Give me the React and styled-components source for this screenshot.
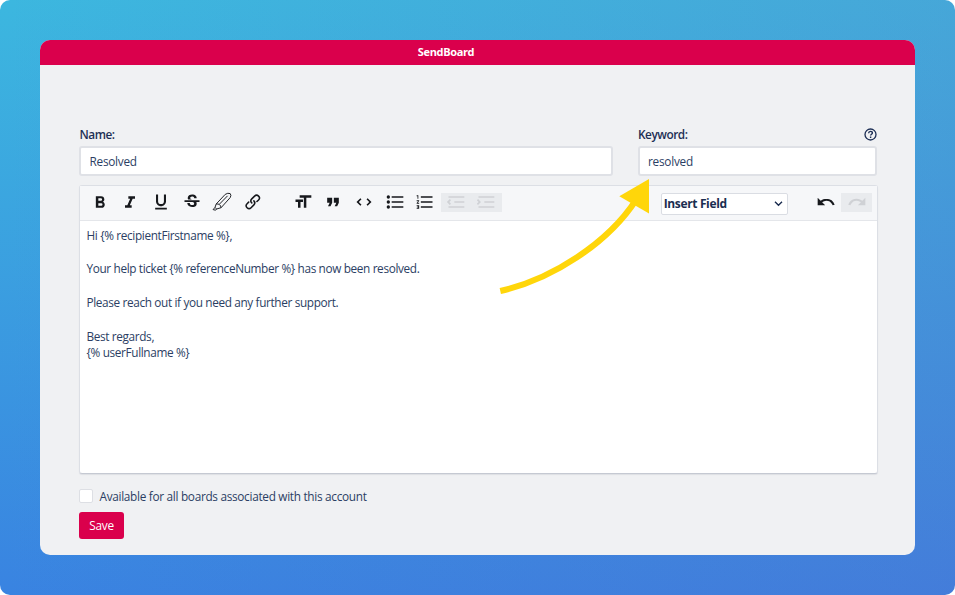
import React from 'react';
import styled, { createGlobalStyle } from 'styled-components';

const GlobalStyle = createGlobalStyle`
    * {
        box-sizing: border-box;
    }
    body {
        margin: 0;
        background: #fff;
        color: #2b3e63;
        font-family: "Open Sans", "Noto Sans", sans-serif;
        font-size: 11.8px;
        letter-spacing: -0.36px;
    }
`
const SPage = styled.div`
    width: 955px;
    height: 595px;
    padding: 40px;
    border-radius: 10px;
    background:
        linear-gradient(90deg, rgba(115, 95, 185, 0) 0%, rgba(115, 95, 185, 0.18) 100%),
        linear-gradient(180deg, #3cb7df 0%, #3983e1 100%);
`
const SCard = styled.main`
    position: relative;
    height: 515px;
    border-radius: 10px;
    overflow: hidden;
    background: #f0f1f3;
`
const SHeader = styled.header`
    height: 24.5px;
    background: #da004c;
    color: #fff;
    font-size: 11px;
    font-weight: 700;
    letter-spacing: -0.35px;
    line-height: 24px;
    text-align: center;
    padding-right: 63px;
`
const SForm = styled.div`
    padding: 61.5px 37px 0 39px;
`
const SFields = styled.div`
    display: grid;
    grid-template-columns: 533.5px 239.5px;
    justify-content: space-between;
    padding-right: 1px;
`
const SLabel = styled.label`
    display: flex;
    align-items: center;
    justify-content: space-between;
    height: 16px;
    margin-bottom: 4px;
    font-weight: 600;
    letter-spacing: -0.45px;
    color: #1d2f55;
    padding-left: 0.5px;
`
const SInput = styled.input`
    display: block;
    width: 100%;
    height: 30px;
    padding: 0 8px 0 8.5px;
    border: 2px solid #dfe1e6;
    border-radius: 3px;
    background: #fff;
    color: inherit;
    font: inherit;
    letter-spacing: -0.25px;
    outline: none;
`
const SEditor = styled.section`
    height: 289px;
    margin-top: 9px;
    border: 1px solid #dcdfe5;
    border-bottom-color: #c5c9d2;
    border-radius: 3px;
    background: #fff;
    box-shadow: 0 1px 1px rgba(9, 30, 66, 0.08);
`
const SToolbar = styled.div`
    display: flex;
    align-items: center;
    height: 34.5px;
    padding: 0 4.5px 1.5px;
    border-bottom: 1px solid #e4e6ea;
    background: #f6f7f9;
`
const SGroup = styled.div`
    display: flex;
    margin-left: ${({ $gap }) => $gap || 0}px;
`
const STool = styled.button`
    display: flex;
    align-items: center;
    justify-content: center;
    width: 30.6px;
    height: 19px;
    padding: 0;
    border: 0;
    background: ${({ disabled }) => (disabled ? '#e9ebee' : 'transparent')};
    color: ${({ disabled }) => (disabled ? '#cfd1d5' : '#17191d')};

    & > svg {
        flex: none;
        width: 20px;
        height: 20px;
        fill: currentColor;
    }
`
const SSelect = styled.div`
    display: flex;
    align-items: center;
    justify-content: space-between;
    width: 127px;
    height: 22px;
    margin: 3px 0 0 159px;
    padding: 0 4px 0 2px;
    border: 1px solid #dadde3;
    border-radius: 2px;
    background: #fff;
    color: #1b2d50;
    font-size: 12px;
    font-weight: 700;

    & > svg {
        width: 9px;
        height: 9px;
    }
`
const SBody = styled.div`
    padding: 6px 6.5px;
    line-height: 16.85px;
    white-space: pre-line;
`
const SCheck = styled.label`
    display: flex;
    align-items: center;
    gap: 6.5px;
    height: 16px;
    margin-top: 14px;
    letter-spacing: -0.3px;
`
const SBox = styled.span`
    width: 14px;
    height: 14px;
    border: 1.5px solid #dddfe4;
    border-radius: 2px;
    background: #fff;
`
const SSave = styled.button`
    display: block;
    width: 45px;
    height: 27px;
    margin: 7.5px 0 0;
    padding: 0;
    border: 0;
    border-radius: 3px;
    background: #da004c;
    color: #fff;
    font: inherit;
    letter-spacing: -0.2px;
`
const SArrow = styled.svg`
    position: absolute;
    left: 450px;
    top: 130px;
    width: 170px;
    height: 130px;
`

const paths = {
    bold: 'M15.6 11.8c1-.7 1.6-1.8 1.6-2.8a4 4 0 0 0-4-4H7v14h7c2.1 0 3.7-1.7 3.7-3.8 0-1.5-.8-2.8-2.1-3.4zM10 7.5h3a1.5 1.5 0 1 1 0 3h-3v-3zm3.5 9H10v-3h3.5a1.5 1.5 0 1 1 0 3z',
    italic: 'M10 5v3h2.2l-3.4 8H6v3h8v-3h-2.2l3.4-8H18V5h-8z',
    underline: 'M12 17c3.3 0 6-2.7 6-6V3h-2.5v8a3.5 3.5 0 0 1-7 0V3H6v8c0 3.3 2.7 6 6 6zm-7 2v2h14v-2H5z',
    strike: 'M6.85 7.08C6.85 4.37 9.45 3 12.24 3c1.64 0 3 .49 3.9 1.28.77.65 1.46 1.73 1.46 3.24h-3.01c0-.31-.05-.59-.15-.85-.29-.86-1.2-1.28-2.25-1.28-1.86 0-2.34 1.02-2.34 1.7 0 .48.25.88.74 1.21.38.27.77.5 1.41.72H7.39c-.21-.34-.54-.89-.54-1.92zM21 12v-2H3v2h9.62c1.15.45 1.96.75 1.96 1.97 0 1-.81 1.67-2.28 1.67-1.54 0-2.93-.54-2.93-2.51H6.4c0 .55.08 1.13.24 1.58.81 2.29 3.29 3.3 5.67 3.3 2.27 0 5.3-.89 5.3-4.05 0-.3-.01-1.16-.48-1.94H21V12z',
    link: 'M9.88 13.7a4.3 4.3 0 0 1 0-6.07l3.37-3.37a4.26 4.26 0 0 1 6.07 0 4.3 4.3 0 0 1 0 6.06l-1.96 1.72a.91.91 0 1 1-1.3-1.3l1.97-1.71a2.46 2.46 0 0 0-3.48-3.48l-3.38 3.37a2.46 2.46 0 0 0 0 3.48.91.91 0 1 1-1.3 1.3zM4.25 19.46a4.3 4.3 0 0 1 0-6.07l1.93-1.9a.91.91 0 1 1 1.3 1.3l-1.93 1.9a2.46 2.46 0 0 0 3.48 3.48l3.37-3.38c.96-.96.96-2.52 0-3.48a.91.91 0 1 1 1.3-1.3 4.3 4.3 0 0 1 0 6.07l-3.38 3.38a4.26 4.26 0 0 1-6.07 0z',
    heading: 'M12 9v3H9v7H6v-7H3V9h9zM8 4h14v3h-6v12h-3V7H8V4z',
    quote: 'M6 17h3l2-4V7H5v6h3zm8 0h3l2-4V7h-6v6h3z',
    code: 'M18.2 12L15 15.2l1.4 1.4L21 12l-4.6-4.6L15 8.8l3.2 3.2zM5.8 12L9 8.8 7.6 7.4 3 12l4.6 4.6L9 15.2 5.8 12z',
    bullets: 'M4 4a2 2 0 1 0 0 4 2 2 0 0 0 0-4zm0 6a2 2 0 1 0 0 4 2 2 0 0 0 0-4zm0 6a2 2 0 1 0 0 4 2 2 0 0 0 0-4zM8 5v2h14V5H8zm0 14h14v-2H8v2zm0-6h14v-2H8v2z',
    numbers: 'M2 17h2v.5H3v1h1v.5H2v1h3v-4H2v1zm1-9h1V4H2v1h1v3zm-1 3h1.8L2 13.1v.9h3v-1H3.2L5 10.9V10H2v1zm5-6v2h14V5H7zm0 14h14v-2H7v2zm0-6h14v-2H7v2z',
    outdent: 'M3 19h19v-2H3v2zm7-6h12v-2H10v2zm-8.3-.3l2.8 2.9L6 14.2 4 12l2-2-1.4-1.5L1 12l.7.7zM3 5v2h19V5H3z',
    indent: 'M3 19h19v-2H3v2zm7-6h12v-2H10v2zm-6.9-1L1 14.2l1.4 1.4L6 12l-.7-.7-2.8-2.8L1 9.9 3.1 12zM3 5v2h19V5H3z',
    undo: 'M12.5 8c-2.6 0-5 1-6.9 2.6L2 7v9h9l-3.6-3.6A8 8 0 0 1 20 16l2.4-.8a10.5 10.5 0 0 0-10-7.2z',
    redo: 'M18.4 10.6a10.5 10.5 0 0 0-16.9 4.6L4 16a8 8 0 0 1 12.7-3.6L13 16h9V7l-3.6 3.6z',
}

const Tool = ({ name, disabled }) => (
    <STool type="button" aria-label={name} disabled={disabled}>
        <svg viewBox="0 0 24 24"><path d={paths[name]} /></svg>
    </STool>
)

const Pen = () => (
    <STool type="button" aria-label="highlight">
        <svg viewBox="0 0 20 20">
            <g fill="none" stroke="currentColor" strokeWidth="0.95" strokeLinejoin="round">
                <path d="M4.2 12 13.2 2.4Q15.8.6 18.2 1.6 19.6 3.2 18.2 5.6L9.1 15.7 4.6 17 3 15.4z" />
                <path d="M4.2 12Q8.4 11.4 9.1 15.7M7.3 12.3 15.6 3.8" />
                <path d="M3 15.4 1.1 17.6 3.6 18.2 4.6 17" />
            </g>
        </svg>
    </STool>
)

const Help = () => (
    <svg width="13" height="13" viewBox="0 0 13 13" fill="none" stroke="#1d2f55">
        <circle cx="6.5" cy="6.5" r="5.5" strokeWidth="1.3" />
        <path d="M4.6 5.3C4.7 3.9 5.5 3.4 6.5 3.4s1.9.6 1.9 1.6c0 1.3-1.8 1.3-1.8 2.6M6.6 8.5v1.4" strokeWidth="1.4" />
    </svg>
)

const message = `Hi {% recipientFirstname %},

Your help ticket {% referenceNumber %} has now been resolved.

Please reach out if you need any further support.

Best regards,
{% userFullname %}`

const App = () => {
    return (
        <>
            <GlobalStyle />
            <SPage>
                <SCard>
                    <SHeader>SendBoard</SHeader>
                    <SForm>
                        <SFields>
                            <div>
                                <SLabel htmlFor="name">Name:</SLabel>
                                <SInput id="name" defaultValue="Resolved" />
                            </div>
                            <div>
                                <SLabel htmlFor="keyword">Keyword:<Help /></SLabel>
                                <SInput id="keyword" defaultValue="resolved" />
                            </div>
                        </SFields>
                        <SEditor>
                            <SToolbar>
                                <SGroup>
                                    <Tool name="bold" />
                                    <Tool name="italic" />
                                    <Tool name="underline" />
                                    <Tool name="strike" />
                                    <Pen />
                                    <Tool name="link" />
                                </SGroup>
                                <SGroup $gap={19.5}>
                                    <Tool name="heading" />
                                    <Tool name="quote" />
                                    <Tool name="code" />
                                    <Tool name="bullets" />
                                    <Tool name="numbers" />
                                    <Tool name="outdent" disabled />
                                    <Tool name="indent" disabled />
                                </SGroup>
                                <SSelect>
                                    Insert Field
                                    <svg viewBox="0 0 9 9" fill="none" stroke="#1b2d50" strokeWidth="1.4">
                                        <path d="M1 2.7 4.5 6.2 8 2.7" />
                                    </svg>
                                </SSelect>
                                <SGroup $gap={23}>
                                    <Tool name="undo" />
                                    <Tool name="redo" disabled />
                                </SGroup>
                            </SToolbar>
                            <SBody>{message}</SBody>
                        </SEditor>
                        <SCheck>
                            <SBox />
                            Available for all boards associated with this account
                        </SCheck>
                        <SSave type="button">Save</SSave>
                    </SForm>
                    <SArrow viewBox="0 0 170 130">
                        <path d="M10.3 121C62 109.5 118 73 146 30" fill="none" stroke="#ffd60a" strokeWidth="6" />
                        <path d="M159 9v34.5L129.3 26.3z" fill="#ffd60a" />
                    </SArrow>
                </SCard>
            </SPage>
        </>
    )
}

export default App
